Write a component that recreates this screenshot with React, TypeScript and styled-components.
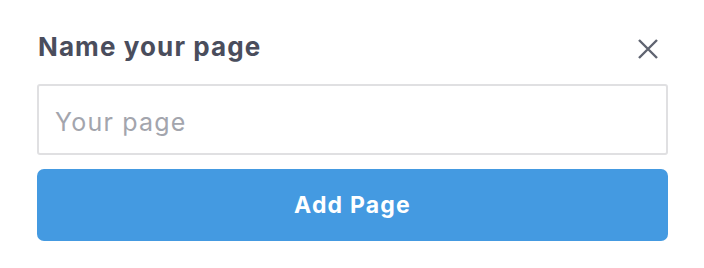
import React from "react";
import styled, { createGlobalStyle } from "styled-components";

const Global = createGlobalStyle`
  html, body { margin: 0; padding: 0; background: #ffffff; }
  body { font-family: Inter, "Liberation Sans", Arial, sans-serif; }
`;

const Panel = styled.div`
  width: 631px;
  padding: 27px 0 0 37px;
  display: flex;
  flex-direction: column;
`;

const Header = styled.div`
  height: 40px;
  display: flex;
  align-items: center;
  justify-content: space-between;
  margin-bottom: 17px;
`;

const Title = styled.h2`
  margin: 0 0 0 1px;
  font-family: Inter, "Liberation Sans", Arial, sans-serif;
  font-size: 26px;
  font-weight: 700;
  letter-spacing: 1.1px;
  color: #4a4d5c;
  line-height: 1;
`;

const CloseButton = styled.button`
  border: 0;
  background: transparent;
  padding: 0;
  width: 28px;
  height: 28px;
  margin-right: 6px;
  margin-top: 3px;
  display: flex;
  align-items: center;
  justify-content: center;
  cursor: pointer;
`;

const Input = styled.input`
  box-sizing: border-box;
  width: 631px;
  height: 71px;
  border: 2px solid #e0e0e2;
  border-radius: 3px;
  padding: 4px 16px 0;
  font-family: Inter, "Liberation Sans", Arial, sans-serif;
  font-size: 25px;
  letter-spacing: 1.2px;
  color: #4a4d5c;
  outline: none;
  &::placeholder { color: #a3a5ad; }
`;

const Submit = styled.button`
  margin-top: 14px;
  width: 631px;
  height: 72px;
  border: 0;
  border-radius: 7px;
  background: #449ae1;
  color: #ffffff;
  font-family: Inter, "Liberation Sans", Arial, sans-serif;
  font-size: 23px;
  font-weight: 700;
  letter-spacing: 1.2px;
  cursor: pointer;
`;

export default function App() {
  return (
    <>
      <Global />
      <Panel>
        <Header>
          <Title>Name your page</Title>
          <CloseButton aria-label="Close">
            <svg width="20" height="20" viewBox="0 0 20 20">
              <path d="M1 1 L19 19 M19 1 L1 19" stroke="#5f6470" strokeWidth="2.4" strokeLinecap="butt" />
            </svg>
          </CloseButton>
        </Header>
        <Input placeholder="Your page" />
        <Submit>Add Page</Submit>
      </Panel>
    </>
  );
}
